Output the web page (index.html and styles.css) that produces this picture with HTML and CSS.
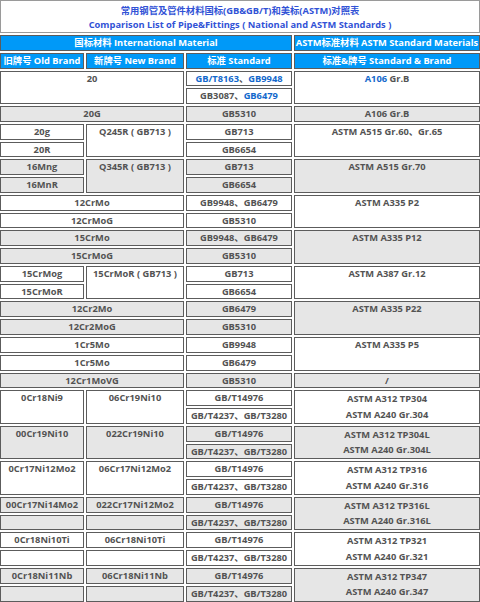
FILE: index.html
```html
<!DOCTYPE html>
<html lang="zh-CN">
<head>
<meta charset="utf-8">
<title>常用钢管及管件材料国标和美标对照表</title>
<link rel="stylesheet" href="styles.css">
</head>
<body>
<table class="cmp">
  <colgroup><col class="c1"><col class="c2"><col class="c3"><col class="c4"></colgroup>
  <tr>
    <td colspan="4" class="title">
      <div class="t-cn">常用钢管及管件材料国标(GB&amp;GB/T)和美标(ASTM)对照表</div>
      <div class="t-en">Comparison List of Pipe&amp;Fittings ( National and ASTM Standards )</div>
    </td>
  </tr>
  <tr class="r head"><td colspan="3">国标材料 International Material</td><td>ASTM标准材料 ASTM Standard Materials</td></tr>
  <tr class="r head"><td>旧牌号 Old Brand</td><td>新牌号 New Brand</td><td>标准 Standard</td><td>标准&amp;牌号 Standard &amp; Brand</td></tr>

  <tr class="r"><td colspan="2" rowspan="2">20</td><td><a href="#">GB/T8163</a>、<a href="#">GB9948</a></td><td rowspan="2"><a href="#">A106</a> Gr.B</td></tr>
  <tr class="r"><td>GB3087、<a href="#">GB6479</a></td></tr>

  <tr class="r g"><td colspan="2">20G</td><td>GB5310</td><td>A106 Gr.B</td></tr>

  <tr class="r"><td>20g</td><td rowspan="2">Q245R ( GB713 )</td><td>GB713</td><td rowspan="2">ASTM A515 Gr.60、Gr.65</td></tr>
  <tr class="r"><td>20R</td><td>GB6654</td></tr>

  <tr class="r g"><td>16Mng</td><td rowspan="2">Q345R ( GB713 )</td><td>GB713</td><td rowspan="2">ASTM A515 Gr.70</td></tr>
  <tr class="r g"><td>16MnR</td><td>GB6654</td></tr>

  <tr class="r"><td colspan="2">12CrMo</td><td>GB9948、GB6479</td><td rowspan="2">ASTM A335 P2</td></tr>
  <tr class="r"><td colspan="2">12CrMoG</td><td>GB5310</td></tr>

  <tr class="r g"><td colspan="2">15CrMo</td><td>GB9948、GB6479</td><td rowspan="2">ASTM A335 P12</td></tr>
  <tr class="r g"><td colspan="2">15CrMoG</td><td>GB5310</td></tr>

  <tr class="r"><td>15CrMog</td><td rowspan="2">15CrMoR ( GB713 )</td><td>GB713</td><td rowspan="2">ASTM A387 Gr.12</td></tr>
  <tr class="r"><td>15CrMoR</td><td>GB6654</td></tr>

  <tr class="r g"><td colspan="2">12Cr2Mo</td><td>GB6479</td><td rowspan="2">ASTM A335 P22</td></tr>
  <tr class="r g"><td colspan="2">12Cr2MoG</td><td>GB5310</td></tr>

  <tr class="r"><td colspan="2">1Cr5Mo</td><td>GB9948</td><td rowspan="2">ASTM A335 P5</td></tr>
  <tr class="r"><td colspan="2">1Cr5Mo</td><td>GB6479</td></tr>

  <tr class="r g"><td colspan="2">12Cr1MoVG</td><td>GB5310</td><td>/</td></tr>

  <tr class="r"><td rowspan="2">0Cr18Ni9</td><td rowspan="2">06Cr19Ni10</td><td>GB/T14976</td><td rowspan="2" class="two">ASTM A312 TP304<br>ASTM A240 Gr.304</td></tr>
  <tr class="r"><td>GB/T4237、GB/T3280</td></tr>

  <tr class="r g"><td rowspan="2">00Cr19Ni10</td><td rowspan="2">022Cr19Ni10</td><td>GB/T14976</td><td rowspan="2" class="two">ASTM A312 TP304L<br>ASTM A240 Gr.304L</td></tr>
  <tr class="r g"><td>GB/T4237、GB/T3280</td></tr>

  <tr class="r"><td rowspan="2">0Cr17Ni12Mo2</td><td rowspan="2">06Cr17Ni12Mo2</td><td>GB/T14976</td><td rowspan="2" class="two">ASTM A312 TP316<br>ASTM A240 Gr.316</td></tr>
  <tr class="r"><td>GB/T4237、GB/T3280</td></tr>

  <tr class="r g"><td>00Cr17Ni14Mo2</td><td>022Cr17Ni12Mo2</td><td>GB/T14976</td><td rowspan="2" class="two">ASTM A312 TP316L<br>ASTM A240 Gr.316L</td></tr>
  <tr class="r g"><td></td><td></td><td>GB/T4237、GB/T3280</td></tr>

  <tr class="r"><td>0Cr18Ni10Ti</td><td>06Cr18Ni10Ti</td><td>GB/T14976</td><td rowspan="2" class="two">ASTM A312 TP321<br>ASTM A240 Gr.321</td></tr>
  <tr class="r"><td></td><td></td><td>GB/T4237、GB/T3280</td></tr>

  <tr class="r g"><td>0Cr18Ni11Nb</td><td>06Cr18Ni11Nb</td><td>GB/T14976</td><td rowspan="2" class="two">ASTM A312 TP347<br>ASTM A240 Gr.347</td></tr>
  <tr class="r g"><td></td><td></td><td>GB/T4237、GB/T3280</td></tr>
</table>
</body>
</html>
```

FILE: styles.css
```css
html, body {
  margin: 0;
  padding: 0;
  overflow: hidden;
  background: #ffffff;
}

.cmp {
  border-collapse: separate;
  border-spacing: 2px;
  table-layout: fixed;
  width: 484px;
  margin: -2px 0 0 -2px;
  font-family: "Open Sans", "Noto Sans CJK SC", sans-serif;
  font-size: 9.3px;
  font-weight: bold;
  color: #535353;
}

.c1 { width: 84px; }
.c2 { width: 98px; }
.c3 { width: 106px; }
.c4 { width: 186px; }

.cmp td {
  border: 1px solid #5c5c5c;
  padding: 0;
  text-align: center;
  vertical-align: top;
  line-height: 13.76px;
  white-space: nowrap;
  overflow: hidden;
  background: #ffffff;
}

.cmp tr.r {
  height: 15.76px;
}

.cmp td.title {
  color: #3152d6;
  padding-top: 2px;
  border-color: #9a9a9a;
}

.t-cn {
  line-height: 15px;
}

.t-en {
  line-height: 14px;
}

.cmp tr.head td {
  background: #0099f8;
  color: #ffffff;
}

.cmp tr.g td {
  background: #e6e6e6;
}

.cmp td.two {
  line-height: 15.4px;
}

.cmp a {
  color: #1268cc;
  text-decoration: none;
}
```
